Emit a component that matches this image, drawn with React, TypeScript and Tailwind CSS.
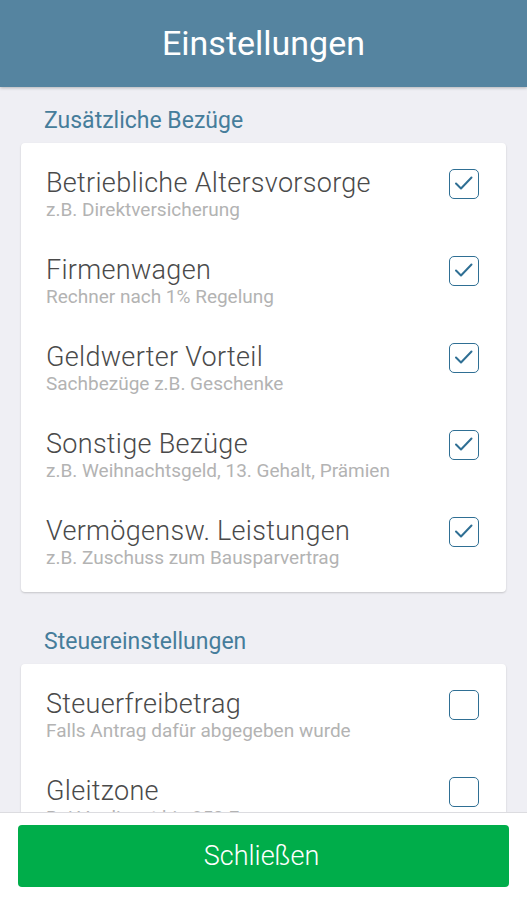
import React from "react";

type Item = { title: string; sub: string; checked: boolean };

const bezuege: Item[] = [
  { title: "Betriebliche Altersvorsorge", sub: "z.B. Direktversicherung", checked: true },
  { title: "Firmenwagen", sub: "Rechner nach 1% Regelung", checked: true },
  { title: "Geldwerter Vorteil", sub: "Sachbezüge z.B. Geschenke", checked: true },
  { title: "Sonstige Bezüge", sub: "z.B. Weihnachtsgeld, 13. Gehalt, Prämien", checked: true },
  { title: "Vermögensw. Leistungen", sub: "z.B. Zuschuss zum Bausparvertrag", checked: true },
];

const steuer: Item[] = [
  { title: "Steuerfreibetrag", sub: "Falls Antrag dafür abgegeben wurde", checked: false },
  { title: "Gleitzone", sub: "Bei Verdienst bis 850 Euro", checked: false },
];

function Checkbox({ checked }: { checked: boolean }) {
  return (
    <div className="w-[30px] h-[30px] shrink-0 rounded-[5px] border-[1.5px] border-[#2f6f94] mt-[1px]">
      {checked && (
        <svg width="27" height="27" viewBox="0 0 27 27" fill="none">
          <path d="M6 13.5 L11 18.5 L21.5 7.5" stroke="#2f6f94" strokeWidth="2" strokeLinecap="round" strokeLinejoin="round" />
        </svg>
      )}
    </div>
  );
}

function Section({ label, items }: { label: string; items: Item[] }) {
  return (
    <div>
      <h2 className="pl-[44px] text-[23px] leading-[28px] text-[#467d9b] mb-[8px]">{label}</h2>
      <div className="mx-[21px] bg-white rounded-[4px] shadow-[0_1px_2px_rgba(0,0,0,0.18)] py-[7px]">
        {items.map((it) => (
          <div key={it.title} className="flex items-start justify-between pl-[25px] pr-[27px] pt-[18px] pb-[15px]">
            <div className="min-w-0">
              <div className="text-[27px] leading-[30px] font-light tracking-[0.3px] text-[#4a4a4a] whitespace-nowrap">{it.title}</div>
              <div className="text-[19px] leading-[24px] text-[#b3b3b3] whitespace-nowrap">{it.sub}</div>
            </div>
            <Checkbox checked={it.checked} />
          </div>
        ))}
      </div>
    </div>
  );
}

export default function App() {
  return (
    <div
      className="h-[900px] w-full flex flex-col bg-[#efeff4] overflow-hidden"
      style={{ fontFamily: "Roboto, 'Liberation Sans', sans-serif" }}
    >
      {/* HEADER */}
      <header className="h-[87px] shrink-0 bg-[#5584a0] flex items-center justify-center shadow-[0_1px_3px_rgba(0,0,0,0.25)] relative z-10">
        <h1 className="text-white text-[34px] leading-none pb-[2px]">Einstellungen</h1>
      </header>

      {/* CONTENT */}
      <div className="flex-1 overflow-hidden pt-[20px]">
        <Section label="Zusätzliche Bezüge" items={bezuege} />
        <div className="h-[36px]" />
        <Section label="Steuereinstellungen" items={steuer} />
      </div>

      {/* FOOTER */}
      <div className="h-[88px] shrink-0 bg-white border-t border-[#dcdce0] px-[18px] pt-[12px]">
        <button className="w-full h-[62px] rounded-[4px] bg-[#00ad4a] text-white text-[27px] font-light pr-[4px]">
          Schließen
        </button>
      </div>
    </div>
  );
}
